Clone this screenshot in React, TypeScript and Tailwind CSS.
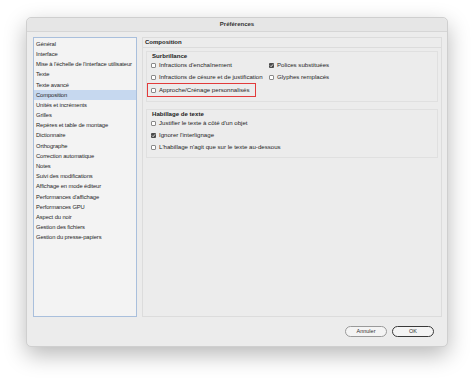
const categories = [
  'Général',
  'Interface',
  "Mise à l'échelle de l'interface utilisateur",
  'Texte',
  'Texte avancé',
  'Composition',
  'Unités et incréments',
  'Grilles',
  'Repères et table de montage',
  'Dictionnaire',
  'Orthographe',
  'Correction automatique',
  'Notes',
  'Suivi des modifications',
  'Affichage en mode éditeur',
  "Performances d'affichage",
  'Performances GPU',
  'Aspect du noir',
  'Gestion des fichiers',
  'Gestion du presse-papiers',
]

function Check({ checked, label }: { checked?: boolean; label: string }) {
  return (
    <div className="flex items-center gap-[3px] h-[12px] whitespace-nowrap">
      {checked ? (
        <span className="w-[5px] h-[5px] rounded-[1px] bg-[#4b4b4b] flex items-center justify-center">
          <svg viewBox="0 0 10 10" className="w-[5px] h-[5px]">
            <path d="M2 5.2 L4.2 7.4 L8 2.8" stroke="#fff" strokeWidth="1.6" fill="none" />
          </svg>
        </span>
      ) : (
        <span className="w-[5px] h-[5px] rounded-[1px] bg-white border-[0.5px] border-[#8a8a8a]" />
      )}
      <span className="text-[#1e1e1e]">{label}</span>
    </div>
  )
}

export default function App() {
  return (
    <div
      className="w-[474px] h-[382px] bg-white pt-[17px] pl-[26px]"
      style={{ fontFamily: '"Liberation Sans", Arial, sans-serif' }}
    >
      <div className="w-[422px] h-[330px] rounded-[5px] bg-[#ececec] border border-[#cfcfcf] shadow-[0_8px_22px_rgba(0,0,0,0.28)] flex flex-col">
        {/* Titre */}
        <div className="h-[14px] rounded-t-[5px] bg-[#e6e6e6] border-b border-[#d6d6d6] flex items-center justify-center text-[6px] font-semibold text-[#333]">
          Préférences
        </div>

        <div className="flex gap-[5px] pl-[6px] pt-[5px]">
          {/* Liste des catégories */}
          <div className="w-[104px] h-[280px] bg-[#f3f3f3] border border-[#a9bfdc] pt-[1px]">
            {categories.map((c) => (
              <div
                key={c}
                className={
                  'h-[10.2px] flex items-center px-[2px] text-[5.8px] text-[#1e1e1e] whitespace-nowrap tracking-[-0.1px] ' +
                  (c === 'Composition' ? 'bg-[#c6d8ef]' : '')
                }
              >
                {c}
              </div>
            ))}
          </div>

          {/* Panneau Composition */}
          <div className="w-[300px] h-[280px] border border-[#dcdcdc] text-[6.1px]">
            <div className="h-[10px] flex items-center px-[2px] border-b border-[#dcdcdc] font-semibold text-[6px] text-[#222]">
              Composition
            </div>

            <div className="mx-[3px] mt-[3px] h-[51px] border border-[#e0e0e0] pl-[4px]">
              <div className="h-[7px] flex items-center pl-[1px] pt-[1px] font-semibold text-[#222]">Surbrillance</div>
              <div className="flex">
                <div className="w-[118px]">
                  <Check label="Infractions d'enchaînement" />
                  <Check label="Infractions de césure et de justification" />
                </div>
                <div>
                  <Check checked label="Polices substituées" />
                  <Check label="Glyphes remplacés" />
                </div>
              </div>
              <div className="-ml-[4px] w-[109px] h-[14px] border border-[#e23b3b] pl-[3px] flex items-center">
                <Check label="Approche/Crénage personnalisés" />
              </div>
            </div>

            <div className="mx-[3px] mt-[7px] h-[49px] border border-[#e0e0e0] pl-[4px]">
              <div className="h-[7px] flex items-center pl-[1px] pt-[1px] font-semibold text-[#222]">Habillage de texte</div>
              <Check label="Justifier le texte à côté d'un objet" />
              <Check checked label="Ignorer l'interlignage" />
              <Check label="L'habillage n'agit que sur le texte au-dessous" />
            </div>
          </div>
        </div>

        {/* Boutons */}
        <div className="flex justify-end gap-[5px] pr-[13px] pt-[9px]">
          <button className="w-[42px] h-[11px] rounded-full border border-[#9a9a9a] bg-[#f4f4f4] text-[5.5px] text-[#333]">
            Annuler
          </button>
          <button className="w-[42px] h-[11px] rounded-full border border-[#3a3a3a] bg-[#f4f4f4] text-[5.5px] text-[#333]">
            OK
          </button>
        </div>
      </div>
    </div>
  )
}
